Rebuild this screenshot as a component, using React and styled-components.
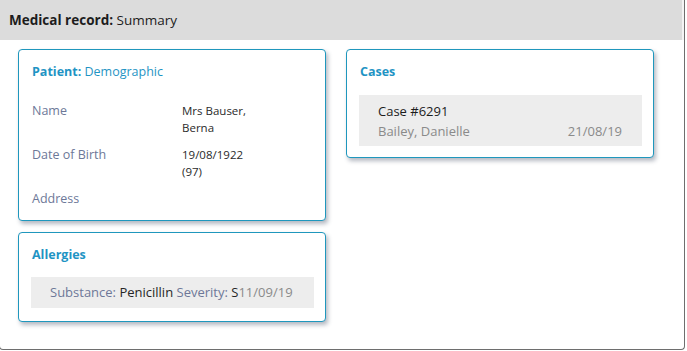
import React from 'react'
import styled, { createGlobalStyle } from 'styled-components'

const GlobalStyle = createGlobalStyle`
  html, body {
    margin: 0;
    padding: 0;
    background: #ffffff;
  }

  body {
    font-family: 'Open Sans', 'Noto Sans', sans-serif;
    color: #222;
  }
`

/* Frame */

const Frame = styled.div`
  box-sizing: border-box;
  width: 686px;
  height: 350px;
  margin-left: -1px;

  border: 1px solid #6e6e6e;
  border-top: 0;
  border-radius: 0 0 4px 4px;
  background: #ffffff;
  overflow: hidden;
`

const Header = styled.header`
  height: 40px;
  padding: 0 9px;

  display: flex;
  align-items: center;

  background: #dcdcdc;
  font-size: 13.5px;
  color: #1c1c1c;
  border-right: 2px solid #f4f4f4;
`

const Strong = styled.span`
  font-weight: 700;
`

const Body = styled.main`
  padding: 9px 0 0 18px;

  display: flex;
  align-items: flex-start;
  gap: 20px;
`

const Column = styled.div`
  display: flex;
  flex-direction: column;
  gap: 11px;
`

/* Card */

const Card = styled.section`
  box-sizing: border-box;
  width: 308px;
  height: ${p => p.height}px;
  padding: 12px 11px 0 12px;

  border: 1px solid #1f97bd;
  border-radius: 4px;
  background: #ffffff;
  box-shadow: 2px 3px 4px rgba(90, 100, 120, 0.45);
`

const Title = styled.h2`
  margin: 0 0 0 1px;
  height: 20px;

  font-size: 12.5px;
  font-weight: 400;
  line-height: 20px;
  color: #1f94c4;
`

const TitleStrong = styled.span`
  font-weight: 700;
`

/* Demographic */

const Fields = styled.dl`
  margin: 20px 0 0 1px;

  display: grid;
  grid-template-columns: 150px 1fr;
  row-gap: 10px;
`

const Label = styled.dt`
  margin: 0;
  font-size: 12.5px;
  line-height: 17px;
  color: #6d7898;
`

const Value = styled.dd`
  margin: 0;
  font-size: 11.5px;
  line-height: 17px;
  color: #2a2a2a;
`

/* Gray strips */

const Strip = styled.div`
  margin-top: ${p => p.top}px;
  height: ${p => p.height}px;
  padding: ${p => p.pad};
  box-sizing: border-box;

  background: #ededed;
  font-size: 13px;
`

const AllergyLine = styled.div`
  line-height: 30px;
  white-space: nowrap;
`

const Muted = styled.span`
  color: ${p => p.tone || '#6d7898'};
`

const Dark = styled.span`
  color: #262626;
`

const CaseName = styled.div`
  line-height: 20px;
  color: #1c1c1c;
`

const CaseMeta = styled.div`
  display: flex;
  justify-content: space-between;
  line-height: 20px;
  color: #8a8a8a;
`

export default function App() {
  return (
    <>
      <GlobalStyle />
      <Frame>
        <Header>
          <Strong>Medical record:</Strong>&nbsp;Summary
        </Header>
        <Body>
          <Column>
            <Card height={172}>
              <Title>
                <TitleStrong>Patient:</TitleStrong> Demographic
              </Title>
              <Fields>
                <Label>Name</Label>
                <Value>
                  Mrs Bauser,
                  <br />
                  Berna
                </Value>
                <Label>Date of Birth</Label>
                <Value>
                  19/08/1922
                  <br />
                  (97)
                </Value>
                <Label>Address</Label>
                <Value />
              </Fields>
            </Card>
            <Card height={90}>
              <Title>
                <TitleStrong>Allergies</TitleStrong>
              </Title>
              <Strip top={12} height={31} pad="0 0 0 19px">
                <AllergyLine>
                  <Muted>Substance:</Muted> <Dark>Penicillin</Dark>{' '}
                  <Muted>Severity:</Muted> <Dark>S</Dark>
                  <Muted tone="#8a8a8a">11/09/19</Muted>
                </AllergyLine>
              </Strip>
            </Card>
          </Column>
          <Card height={109}>
            <Title>
              <TitleStrong>Cases</TitleStrong>
            </Title>
            <Strip top={13} height={51} pad="6px 20px 0 19px">
              <CaseName>Case #6291</CaseName>
              <CaseMeta>
                <span>Bailey, Danielle</span>
                <span>21/08/19</span>
              </CaseMeta>
            </Strip>
          </Card>
        </Body>
      </Frame>
    </>
  )
}
